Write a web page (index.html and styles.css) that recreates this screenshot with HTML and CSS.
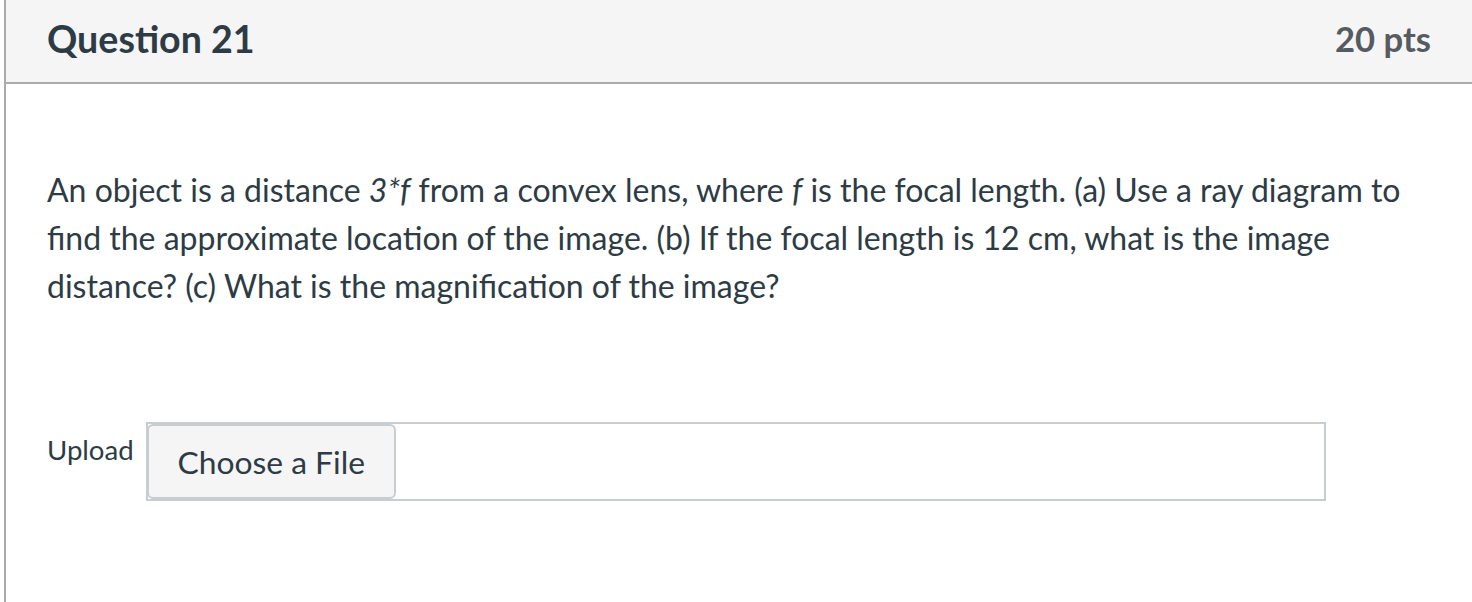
FILE: index.html
```html
<!DOCTYPE html>
<html>
<head>
<meta charset="utf-8">
<link rel="stylesheet" href="styles.css">
</head>
<body>
<div class="question">
  <div class="header">
    <span class="title">Question 21</span>
    <span class="pts">20 pts</span>
  </div>
  <div class="content">
    <p class="text">An object is a distance <em>3*f</em> from a convex lens, where <em>f</em> is the focal length. (a) Use a ray diagram to find the approximate location of the image. (b) If the focal length is 12 cm, what is the image distance? (c) What is the magnification of the image?</p>
    <div class="upload">
      <span class="label">Upload</span>
      <div class="filebox">
        <span class="btn">Choose a File</span>
      </div>
    </div>
  </div>
</div>
</body>
</html>
```
FILE: styles.css
```css
html, body {
  margin: 0;
  padding: 0;
  overflow: hidden;
  background: #fff;
}
body {
  font-family: Lato, "Noto Sans", sans-serif;
  color: #2d3b45;
}
.question {
  margin-left: 4px;
  width: 1470px;
  height: 602px;
  box-sizing: border-box;
  border-left: 2px solid #aaaaaa;
  border-right: 2px solid #aaaaaa;
}
.header {
  height: 84px;
  box-sizing: border-box;
  background: #f5f5f5;
  border-bottom: 2px solid #aaaaaa;
  display: flex;
  justify-content: space-between;
  align-items: center;
  padding: 0 41px 6px 41px;
}
.title {
  font-weight: 700;
  font-size: 37.6px;
  color: #2d3b45;
}
.pts {
  font-weight: 700;
  font-size: 34.6px;
  color: #555b60;
}
.content {
  padding: 82px 41px 0 41px;
}
.text {
  margin: 0;
  font-size: 32px;
  line-height: 48px;
  width: 1400px;
}
.text em {
  font-style: italic;
}
.upload {
  margin-top: 112px;
  display: flex;
  align-items: flex-start;
  gap: 12px;
}
.label {
  font-size: 27.6px;
  margin-top: 11px;
}
.filebox {
  width: 1180px;
  height: 79px;
  box-sizing: border-box;
  border: 2px solid #c7cdd1;
  display: flex;
}
.btn {
  width: 249px;
  box-sizing: border-box;
  margin: 0 0 0 -1px;
  background: #f5f5f5;
  border: 2px solid #c7cdd1;
  border-radius: 6px;
  font-size: 31.8px;
  display: flex;
  align-items: center;
  justify-content: center;
}
```
